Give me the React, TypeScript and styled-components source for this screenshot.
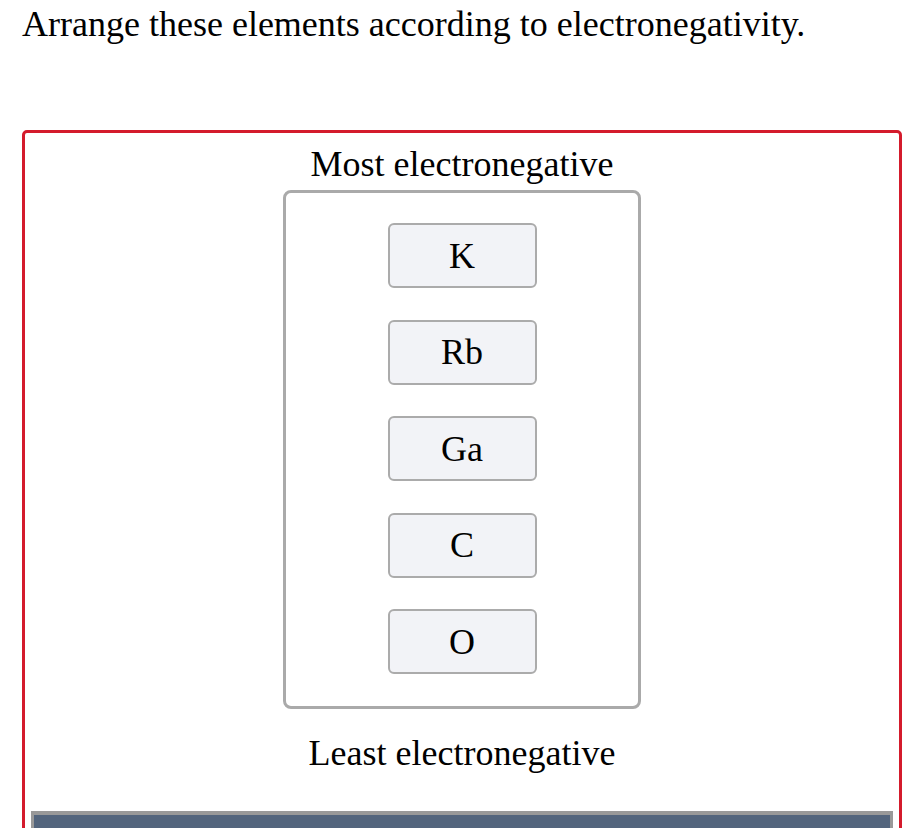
import React from 'react'
import styled, { createGlobalStyle } from 'styled-components'

const elements = ['K', 'Rb', 'Ga', 'C', 'O']

const GlobalStyle = createGlobalStyle`
  html, body {
    margin: 0;
    padding: 0;
    background: #ffffff;
  }
  body {
    font-family: 'Liberation Serif', 'Times New Roman', serif;
    color: #000000;
  }
`

export default function App() {
  return (
    <>
      <GlobalStyle />
      <Page>
        <Prompt>Arrange these elements according to electronegativity.</Prompt>
        <Panel>
          <EndLabel>Most electronegative</EndLabel>
          <SortList>
            {elements.map((el) => (
              <Tile key={el}>{el}</Tile>
            ))}
          </SortList>
          <EndLabel $bottom>Least electronegative</EndLabel>
          <ActionBar />
        </Panel>
      </Page>
    </>
  )
}

const Page = styled.div`
  padding: 0 22px;
`

const Prompt = styled.h1`
  margin: 0;
  padding-top: 3px;
  font-size: 36px;
  line-height: 42px;
  font-weight: normal;
  margin-bottom: 85px;
`

const Panel = styled.section`
  border: 3px solid #d41b2c;
  border-radius: 5px;
  display: flex;
  flex-direction: column;
  align-items: center;
  padding-top: 10px;
  min-height: 760px;
`

const EndLabel = styled.div<{ $bottom?: boolean }>`
  font-size: 36px;
  line-height: 42px;
  margin-top: ${(p) => (p.$bottom ? '23px' : '0')};
  margin-bottom: ${(p) => (p.$bottom ? '37px' : '5px')};
`

const SortList = styled.div`
  box-sizing: border-box;
  width: 358px;
  border: 3px solid #aaaaaa;
  border-radius: 8px;
  padding: 30px 0 32px;
  display: flex;
  flex-direction: column;
  align-items: center;
  gap: 31.5px;
`

const Tile = styled.div`
  box-sizing: border-box;
  width: 149px;
  height: 65px;
  border: 2px solid #ababab;
  border-radius: 6px;
  background: #f2f3f7;
  display: flex;
  align-items: center;
  justify-content: center;
  font-size: 36px;
  line-height: 1;
`

const ActionBar = styled.div`
  align-self: stretch;
  margin: 0 6px;
  height: 60px;
  border: 3px solid #999999;
  border-top-width: 4px;
  background: #53657d;
`
